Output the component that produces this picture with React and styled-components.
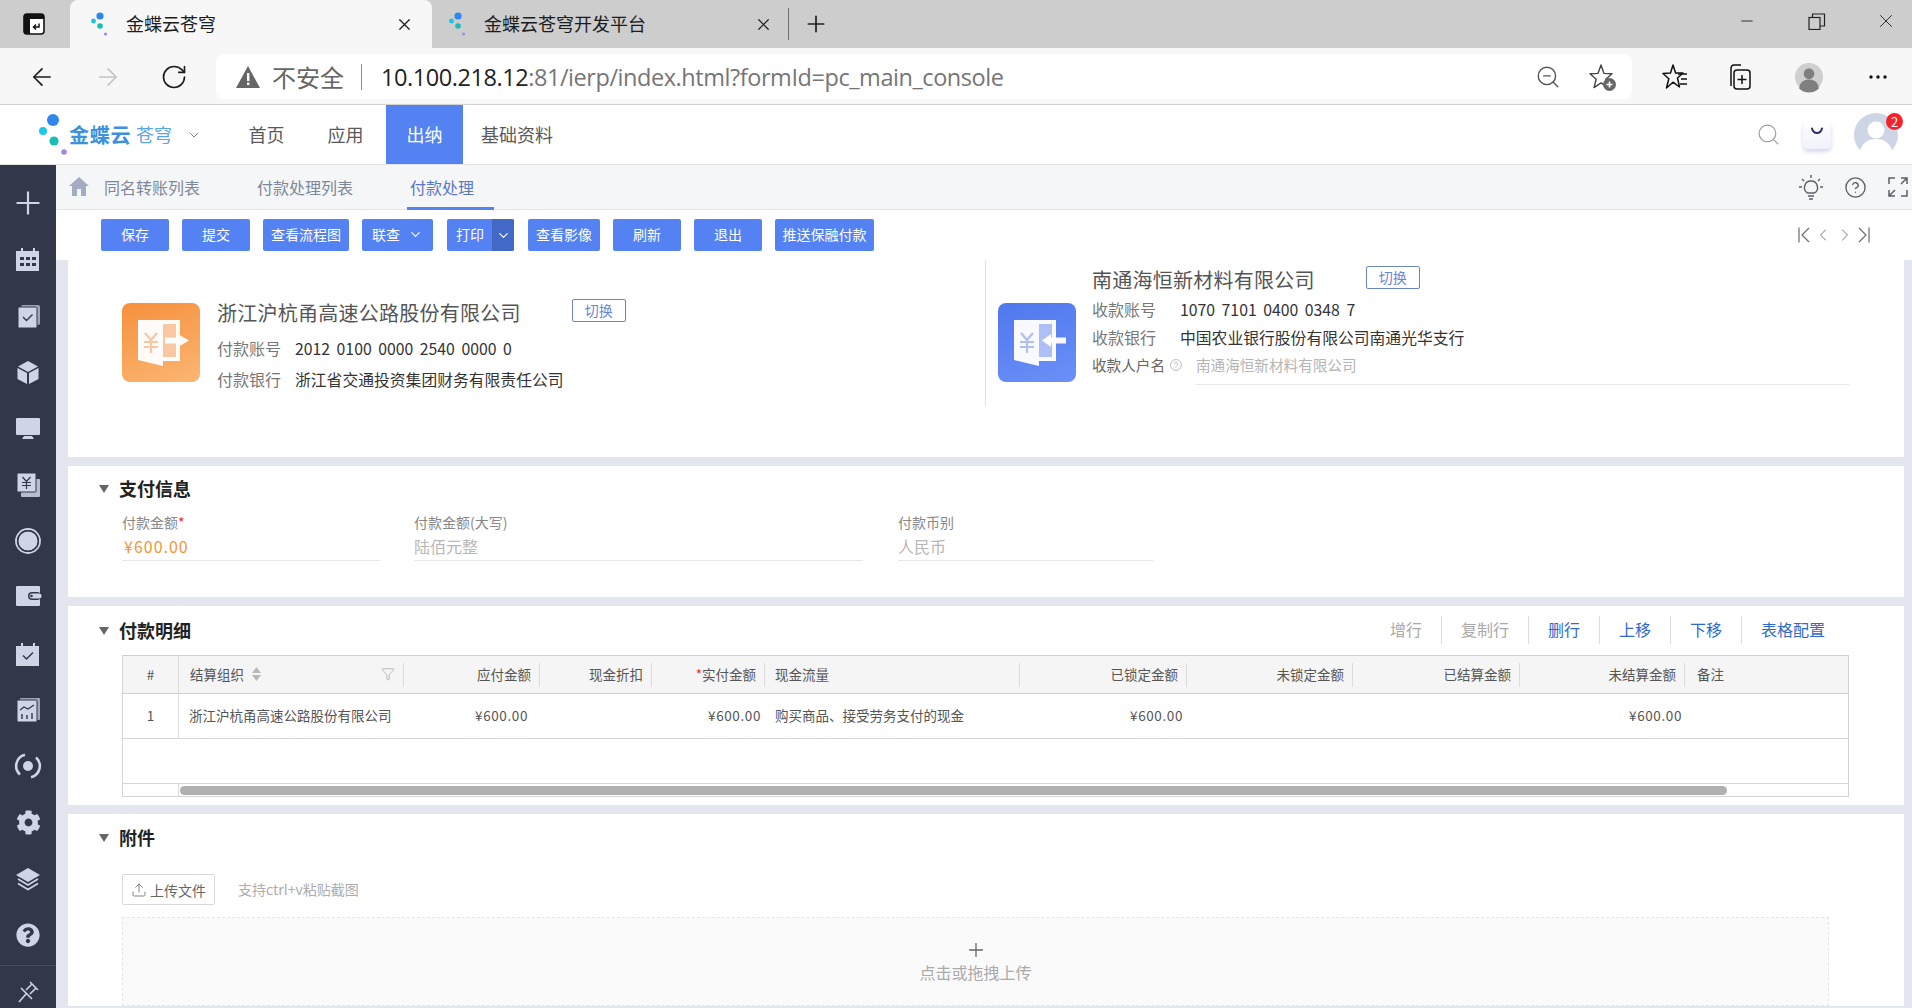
import React from "react";
import styled, { createGlobalStyle } from "styled-components";
import { ArrowLeft, ArrowRight, RotateCw, Plus, X, Minus, Search, ZoomOut, Upload, ChevronDown, ChevronLeft, ChevronRight, Filter, CircleHelp } from "lucide-react";
import { FaCog, FaQuestionCircle } from "react-icons/fa";

const CJK = `"Noto Sans CJK SC", "Noto Sans", sans-serif`;
const BLUE = "#5582f3";

const Global = createGlobalStyle`
  html, body { margin: 0; padding: 0; height: 100%; overflow: hidden; background: #fff; }
  body { font-family: ${CJK}; color: #333; }
  * { box-sizing: border-box; }
`;

const Page = styled.div`
  width: 1912px;
  height: 1008px;
  display: flex;
  flex-direction: column;
  overflow: hidden;
`;

/* ---------- browser chrome ---------- */
const TabStrip = styled.div`
  height: 48px;
  flex: none;
  display: flex;
  align-items: stretch;
  background: #cdcdcd;
`;
const TabManager = styled.div`
  width: 70px;
  display: flex;
  align-items: center;
  justify-content: center;
  padding-right: 2px;
`;
const Tab = styled.div`
  width: ${(p) => (p.$active ? 362 : 356)}px;
  display: flex;
  align-items: center;
  padding: 0 ${(p) => (p.$active ? 18 : 15)}px 0 ${(p) => (p.$active ? 21 : 17)}px;
  background: ${(p) => (p.$active ? "#f7f7f7" : "transparent")};
  border-radius: 8px 8px 0 0;
  font-size: 18px;
  color: #1c1c1c;
`;
const TabTitle = styled.span`
  margin-left: 19px;
  flex: 1;
  padding-bottom: 2px;
`;
const TabDivider = styled.div`
  width: 1px;
  height: 32px;
  align-self: center;
  background: #6f6f6f;
`;
const NewTab = styled.div`
  width: 54px;
  display: flex;
  align-items: center;
  justify-content: center;
  color: #222;
`;
const WindowControls = styled.div`
  margin-left: auto;
  display: flex;
  align-items: center;
  gap: 29.5px;
  padding-right: 6px;
  padding-bottom: 6px;
  color: #222;
`;
const WindowButton = styled.div`
  width: 40px;
  display: flex;
  align-items: center;
  justify-content: center;
`;

const BrowserBar = styled.div`
  height: 57px;
  flex: none;
  display: flex;
  align-items: flex-start;
  background: #f7f7f7;
  border-bottom: 1px solid #d2d2d2;
  padding: 6px 0 0 28px;
`;
const BarButtons = styled.div`
  display: flex;
  align-items: center;
  height: 45px;
  gap: ${(p) => p.$gap ?? 38}px;
  margin-left: ${(p) => p.$ml ?? 0}px;
`;
const BarButton = styled.div`
  width: 28px;
  display: flex;
  align-items: center;
  justify-content: center;
  margin-left: ${(p) => p.$ml ?? 0}px;
  color: ${(p) => p.$color || "#1c1c1c"};
`;
const Address = styled.div`
  width: 1416px;
  height: 45px;
  margin-left: 28px;
  display: flex;
  align-items: center;
  background: #fff;
  border-radius: 8px;
  padding-left: 20px;
`;
const NotSecure = styled.span`
  margin-left: 12px;
  font-size: 24px;
  color: #666;
`;
const AddressDivider = styled.span`
  width: 1px;
  height: 26px;
  margin: 0 19px 0 17px;
  background: #8a8a8a;
`;
const UrlHost = styled.span`
  font-family: "Open Sans", "Noto Sans", sans-serif;
  font-size: 23.5px;
  color: #222;
  letter-spacing: -0.44px;
`;
const UrlRest = styled(UrlHost)`
  color: #767676;
`;
const AddressTools = styled.div`
  margin-left: auto;
  display: flex;
  align-items: center;
  gap: 27px;
  padding-right: 15px;
`;

/* ---------- app header ---------- */
const Header = styled.header`
  height: 60px;
  flex: none;
  display: flex;
  align-items: stretch;
  background: #fff;
  border-bottom: 1px solid #e4e4e4;
`;
const Logo = styled.div`
  width: 228px;
  display: flex;
  align-items: center;
  padding-left: 39px;
`;
const LogoMain = styled.span`
  margin-left: 0;
  font-size: 20px;
  font-weight: 700;
  color: #3d8fe0;
  letter-spacing: 0.7px;
  padding-bottom: 1px;
`;
const LogoSub = styled.span`
  margin-left: 5px;
  font-size: 18px;
  color: #5ca3e8;
  padding-bottom: 1px;
`;
const LogoCaret = styled.span`
  margin-left: 14px;
  display: flex;
  color: #777;
`;
const Nav = styled.nav`
  display: flex;
  align-items: stretch;
  gap: 2px;
`;
const NavItem = styled.div`
  display: flex;
  align-items: center;
  padding: 0 20.5px 2px ${(p) => (p.$tight ? 16 : 20.5)}px;
  font-size: 18px;
  color: ${(p) => (p.$active ? "#fff" : "#595959")};
  background: ${(p) => (p.$active ? BLUE : "transparent")};
`;
const HeaderTools = styled.div`
  margin-left: auto;
  display: flex;
  align-items: center;
  padding-right: 14px;
`;
const Bag = styled.div`
  width: 28px;
  height: 28px;
  margin-left: 22px;
  border-radius: 5px;
  background: linear-gradient(#fff, #f0f1fb);
  box-shadow: 0 3px 4px #d6d8f0;
  display: flex;
  justify-content: center;
  padding-top: 6px;
`;
const AvatarWrap = styled.div`
  position: relative;
  width: 44px;
  height: 44px;
  margin-left: 23px;
  border-radius: 50%;
`;
const Badge = styled.span`
  position: absolute;
  top: 0;
  right: -5px;
  width: 17px;
  height: 17px;
  border-radius: 50%;
  background: #f5222d;
  color: #fff;
  font-size: 13px;
  line-height: 17px;
  text-align: center;
`;

/* ---------- shell ---------- */
const Shell = styled.div`
  flex: 1;
  min-height: 0;
  display: flex;
`;
const Sidebar = styled.aside`
  width: 56px;
  flex: none;
  display: flex;
  flex-direction: column;
  background: #33374a;
  padding-top: 10px;
  color: #cfd5e5;
`;
const SideItem = styled.div`
  height: 56.3px;
  flex: none;
  display: flex;
  align-items: center;
  justify-content: center;
`;
const SideFoot = styled.div`
  margin-top: 2px;
  border-top: 1px solid #444a5d;
  flex: 1;
  display: flex;
  align-items: flex-start;
  justify-content: center;
  padding-top: 13px;
`;
const Main = styled.main`
  flex: 1;
  min-width: 0;
  display: flex;
  flex-direction: column;
`;
const PageTabs = styled.div`
  height: 45px;
  flex: none;
  display: flex;
  align-items: stretch;
  background: #f5f6f8;
  border-bottom: 1px solid #e4e5e8;
  padding-left: 13px;
`;
const HomeIcon = styled.span`
  display: flex;
  align-items: center;
  width: 32px;
  padding-bottom: 3px;
`;
const PageTab = styled.div`
  display: flex;
  align-items: center;
  margin-right: 34px;
  padding: 1px 20px 0 3px;
  font-size: 16px;
  color: ${(p) => (p.$active ? "#5a78c4" : "#7d8799")};
  border-bottom: 3px solid ${(p) => (p.$active ? BLUE : "transparent")};
  margin-bottom: -1px;
`;
const PageTabTools = styled.div`
  margin-left: auto;
  display: flex;
  align-items: center;
  gap: 20px;
  padding-right: 3px;
  color: #5a5f69;
`;
const ActionBar = styled.div`
  height: 50px;
  flex: none;
  display: flex;
  align-items: flex-start;
  background: #fff;
  padding: 9px 40px 0 45px;
`;
const Btn = styled.button`
  height: 32px;
  width: ${(p) => p.$w}px;
  margin-right: ${(p) => p.$mr ?? 13}px;
  padding: 0 0 2px;
  border: 0;
  border-radius: 2px;
  background: ${BLUE};
  color: #fff;
  font: 14px ${CJK};
  display: flex;
  align-items: center;
  justify-content: center;
  gap: 8px;
  overflow: hidden;
`;
const SplitBtn = styled(Btn)`
  padding: 0;
`;
const SplitPart = styled.span`
  height: 100%;
  width: 22px;
  margin-left: auto;
  background: #4369c7;
  display: flex;
  align-items: center;
  justify-content: center;
`;
const SplitLabel = styled.span`
  margin-left: 9px;
  padding-bottom: 2px;
`;
const Pager = styled.div`
  margin-left: auto;
  display: flex;
  align-items: center;
  height: 32px;
  gap: 1.5px;
  color: #6c6c6c;
`;
const Content = styled.div`
  flex: 1;
  min-height: 0;
  overflow: hidden;
  background: #e3e6ee;
  padding: 0 8px 0 12px;
  display: flex;
  flex-direction: column;
  gap: 9px;
`;
const Card = styled.section`
  background: #fff;
  flex: none;
  height: ${(p) => (p.$h ? p.$h + "px" : "auto")};
`;

/* accounts */
const Parties = styled.div`
  display: grid;
  grid-template-columns: 917px 1fr;
  height: 197px;
`;
const PartyLeft = styled.div`
  display: flex;
  gap: 17px;
  padding: 39px 0 0 54px;
  align-items: flex-start;
`;
const PartyRight = styled.div`
  height: 146px;
  border-left: 1px solid #dfe1e5;
  display: flex;
  gap: 16px;
  padding: 6px 0 0 12px;
  align-items: flex-start;
`;
const AccountIcon = styled.div`
  width: 78px;
  height: 79px;
  flex: none;
  margin-top: ${(p) => p.$mt}px;
  border-radius: 8px;
  background: ${(p) => p.$bg};
`;
const PartyInfo = styled.div`
  flex: none;
  display: flex;
  flex-direction: column;
`;
const PartyTitleRow = styled.div`
  height: 26px;
  display: flex;
  align-items: center;
  margin-bottom: ${(p) => p.$mb}px;
`;
const PartyName = styled.div`
  font-size: 20px;
  color: #555;
  letter-spacing: 0.25px;
`;
const SwitchBtn = styled.div`
  width: 54px;
  height: 23px;
  margin-left: ${(p) => p.$ml}px;
  margin-bottom: 3px;
  padding-bottom: 2px;
  border: 1px solid #6a86c4;
  border-radius: 2px;
  color: #6a86d8;
  font-size: 14px;
  display: flex;
  align-items: center;
  justify-content: center;
`;
const InfoRow = styled.div`
  height: ${(p) => p.$h}px;
  display: flex;
  align-items: center;
  font-size: 16px;
`;
const InfoLabel = styled.span`
  width: ${(p) => p.$w}px;
  flex: none;
  color: #777;
`;
const InfoValue = styled.span`
  font-size: 15.8px;
  color: #333;
  word-spacing: 3px;
`;
const PayeeRow = styled.div`
  height: 34px;
  display: flex;
  font-size: 14.6px;
`;
const PayeeLabel = styled.span`
  line-height: 28px;
  color: #666;
`;
const PayeeHelp = styled.span`
  height: 28px;
  display: flex;
  align-items: center;
  margin: 0 14px 0 5px;
  color: #bbb;
`;
const PayeeValue = styled.span`
  width: 653px;
  line-height: 28px;
  color: #b4b4b4;
  border-bottom: 1px solid #e6e6e6;
`;

/* sections */
const SectionHead = styled.div`
  height: ${(p) => p.$h}px;
  display: flex;
  align-items: center;
  padding-left: 31px;
`;
const Caret = styled.span`
  width: 0;
  height: 0;
  border-left: 5.5px solid transparent;
  border-right: 5.5px solid transparent;
  border-top: 8px solid #666;
`;
const SectionTitle = styled.h3`
  margin: 0 0 0 10px;
  padding-bottom: 2px;
  font-size: 18px;
  font-weight: 700;
  color: #222;
`;
const Fields = styled.div`
  display: flex;
  padding-left: 54px;
`;
const Field = styled.div`
  width: ${(p) => p.$w}px;
  margin-right: ${(p) => p.$mr ?? 0}px;
`;
const FieldLabel = styled.div`
  height: 22px;
  line-height: 22px;
  font-size: 14px;
  color: #888;
`;
const Req = styled.span`
  color: #f5222d;
`;
const FieldValue = styled.div`
  height: 28px;
  line-height: 27px;
  font-size: 16px;
  letter-spacing: ${(p) => p.$ls ?? 0}px;
  padding-left: ${(p) => p.$pl ?? 0}px;
  color: ${(p) => p.$color || "#b8b8b8"};
  border-bottom: 1px solid #e6e6e6;
`;

/* table */
const GridActions = styled.div`
  margin-left: auto;
  display: flex;
  align-items: center;
  padding-right: 60px;
  padding-bottom: 1px;
`;
const GridAction = styled.div`
  height: 28px;
  line-height: 26px;
  padding: 0 19px;
  font-size: 16px;
  color: ${(p) => (p.$off ? "#a9a9a9" : "#2f6ad0")};
  border-left: ${(p) => (p.$first ? "0" : "1px solid #ddd")};
`;
const COLS = "56px 225px 136px 112px 113px 255px 167px 166px 167px 165px 1fr";
const Table = styled.div`
  margin-left: 54px;
  width: 1727px;
  border-left: 1px solid #d4d4d4;
  border-right: 1px solid #d4d4d4;
  border-bottom: 1px solid #d4d4d4;
`;
const HeadRow = styled.div`
  height: 39px;
  display: grid;
  grid-template-columns: ${COLS};
  align-items: center;
  background: #f5f5f5;
  border-top: 1px solid #cfcfcf;
  border-bottom: 1px solid #cfcfcf;
`;
const HeadCell = styled.div`
  height: 24px;
  display: flex;
  align-items: center;
  justify-content: ${(p) => (p.$right ? "flex-end" : "flex-start")};
  gap: 8px;
  padding: 0 8px 2px ${(p) => p.$pl ?? 5}px;
  font-size: 13.5px;
  color: #555;
  border-right: ${(p) => (p.$nosep ? "0" : "1px solid #dcdcdc")};
`;
const HeadIndex = styled(HeadCell)`
  height: 37px;
  justify-content: center;
  padding: 0 0 2px;
`;
const HeadFilter = styled.span`
  margin-left: auto;
  display: flex;
  color: #999;
  padding-right: 0;
`;
const SortIcon = styled.span`
  display: flex;
`;
const BodyRow = styled.div`
  height: ${(p) => p.$h}px;
  display: grid;
  grid-template-columns: ${COLS};
  align-items: center;
  border-bottom: 1px solid #d6d6d6;
`;
const BodyCell = styled.div`
  height: 100%;
  display: flex;
  align-items: center;
  justify-content: ${(p) => (p.$right ? "flex-end" : p.$center ? "center" : "flex-start")};
  padding: 0 ${(p) => p.$pr ?? 5}px 2px ${(p) => p.$pl ?? 5}px;
  font-size: 13.5px;
  letter-spacing: ${(p) => (p.$right ? 0.6 : 0)}px;
  color: #555;
  white-space: nowrap;
  border-right: ${(p) => (p.$sep ? "1px solid #dcdcdc" : "0")};
`;
const ScrollRow = styled.div`
  height: 12px;
  display: flex;
`;
const ScrollCorner = styled.div`
  width: 56px;
  border-right: 1px solid #dcdcdc;
`;
const ScrollThumb = styled.div`
  width: 1547px;
  height: 9px;
  margin: 2px 0 0 1px;
  border-radius: 5px;
  background: #b0b0b0;
`;

/* attachments */
const UploadRow = styled.div`
  display: flex;
  align-items: center;
  margin: 12px 0 12px 54px;
`;
const UploadBtn = styled.div`
  width: 93px;
  height: 31px;
  border: 1px solid #d9d9d9;
  border-radius: 2px;
  display: flex;
  align-items: center;
  justify-content: center;
  gap: 3px;
  font-size: 14px;
  color: #666;
`;
const UploadHint = styled.span`
  margin-left: 23px;
  padding-bottom: 2px;
  font-size: 14px;
  color: #adadad;
`;
const Dropzone = styled.div`
  margin-left: 54px;
  width: 1707px;
  height: 89px;
  background: #fafafa;
  border: 1px dashed #e6e6e6;
  display: flex;
  flex-direction: column;
  align-items: center;
  padding-top: 21px;
  color: #666;
`;
const DropText = styled.div`
  font-size: 16px;
  line-height: 22px;
  color: #aaa;
`;

/* ---------- drawings ---------- */
const Favicon = () => (
  <svg width="16" height="24" viewBox="0 0 16 24" fill="none">
    <circle cx="9" cy="4" r="3.6" fill="#2f86ee" />
    <circle cx="2.5" cy="9" r="2.4" fill="#1cc3e3" />
    <circle cx="9" cy="14" r="2.8" fill="#19bdb4" />
    <circle cx="14.5" cy="22" r="1.6" fill="#a58be6" />
  </svg>
);
const LogoMark = () => (
  <svg width="30" height="42" viewBox="0 0 30 42" fill="none">
    <circle cx="14" cy="6" r="6" fill="#2f86ee" />
    <circle cx="4" cy="17" r="4" fill="#1cc9e8" />
    <circle cx="15" cy="27" r="4.6" fill="#19bdb4" />
    <circle cx="25" cy="38" r="2.8" fill="#a884e8" />
  </svg>
);
const TabManagerIcon = () => (
  <svg width="22" height="22" viewBox="0 0 22 22" fill="none">
    <rect x="1" y="1" width="20" height="20" rx="3" fill="#fff" stroke="#111" strokeWidth="1.6" />
    <path d="M1 3.5a2.5 2.5 0 0 1 2.5-2.5h15A2.5 2.5 0 0 1 21 3.5V6H1z" fill="#111" />
    <rect x="1" y="5" width="6" height="16" fill="#111" />
    <path d="M16 10.5v3.5h-5M13 11.5l-2.5 2.5 2.5 2.5" stroke="#111" strokeWidth="1.5" fill="none" />
  </svg>
);
const Warn = () => (
  <svg width="24" height="22" viewBox="0 0 24 22">
    <path d="M12 0 L24 22 H0 Z" fill="#666" strokeLinejoin="round" />
    <rect x="11" y="7" width="2.4" height="8" fill="#fff" />
    <rect x="11" y="16.5" width="2.4" height="2.6" fill="#fff" />
  </svg>
);
const StarPlus = () => (
  <svg width="28" height="30" viewBox="0 0 28 30" fill="none">
    <path d="M12 3l3 8.4 8 .4-6.2 5.4 2.2 8.4-7-4.7-7 4.7 2.2-8.4L1 11.8l8-.4z" stroke="#444" strokeWidth="1.4" strokeLinejoin="round" />
    <circle cx="20.5" cy="22.5" r="6.5" fill="#666" />
    <path d="M20.5 19.5v6M17.5 22.5h6" stroke="#fff" strokeWidth="1.6" />
  </svg>
);
const Favorites = () => (
  <svg width="28" height="28" viewBox="0 0 28 28" fill="none">
    <path d="M12 2l2.6 8H22l-5.5 5 2 9-6.500-4.800L5.500 25l2.300-9.200L2 10.500l7.500-.5z" stroke="#111" strokeWidth="1.5" strokeLinejoin="round" />
    <path d="M17 11h9M20 16h6M19 21h7" stroke="#111" strokeWidth="1.5" />
  </svg>
);
const Collections = () => (
  <svg width="26" height="28" viewBox="0 0 26 28" fill="none">
    <path d="M5 23V6c0-2 1-4 3-4h7" stroke="#111" strokeWidth="1.5" />
    <rect x="8" y="7" width="16" height="19" rx="3" stroke="#111" strokeWidth="1.5" fill="#f7f7f7" />
    <path d="M16 12v9M11.5 16.5h9" stroke="#111" strokeWidth="1.5" />
  </svg>
);
const RestoreIcon = () => (
  <svg width="18" height="17" viewBox="0 0 18 17" fill="none" stroke="#222" strokeWidth="1.2">
    <rect x="1" y="4.5" width="11" height="12" />
    <path d="M4.5 4.5V1h12v12H12" />
  </svg>
);
const Profile = () => (
  <svg width="34" height="34" viewBox="0 0 34 34">
    <circle cx="17" cy="17" r="17" fill="#cfcfcf" />
    <circle cx="17" cy="13" r="6.5" fill="#7f7f7f" />
    <path d="M5 31c1-8 6-11 12-11s11 3 12 11a17 17 0 0 1-24 0z" fill="#7f7f7f" />
  </svg>
);
const Dots = () => (
  <svg width="20" height="6" viewBox="0 0 20 6" fill="#111">
    <circle cx="3" cy="3" r="1.7" />
    <circle cx="10" cy="3" r="1.7" />
    <circle cx="17" cy="3" r="1.7" />
  </svg>
);
const Smile = () => (
  <svg width="14" height="8" viewBox="0 0 14 8" fill="none">
    <path d="M2 1.5c1 3.5 3 4.5 5 4.5s4-1 5-4.500" stroke="#2a2f6b" strokeWidth="2" strokeLinecap="round" />
  </svg>
);
const Avatar = () => (
  <svg width="44" height="44" viewBox="0 0 44 44">
    <circle cx="22" cy="22" r="22" fill="#ced6e6" />
    <circle cx="22" cy="17" r="8.5" fill="#fff" />
    <path d="M6 38c2-8 8-12 16-12s14 4 16 12a22 22 0 0 1-32 0z" fill="#fff" />
  </svg>
);
const Home = () => (
  <svg width="20" height="20" viewBox="0 0 20 20" fill="#a3acc0">
    <path d="M10 1 L20 10 H17 V20 H12 V13 H8 V20 H3 V10 H0 Z" />
  </svg>
);
const Bulb = () => (
  <svg width="26" height="26" viewBox="0 0 26 26" fill="none" stroke="#5a5f69" strokeWidth="1.4">
    <path d="M13 1v3M4 5l2 2M22 5l-2 2M1 13h3M22 13h3" />
    <path d="M13 7a6.5 6.5 0 0 0-3.5 12h7A6.5 6.5 0 0 0 13 7z" />
    <path d="M10 22h6M11 25h4" />
  </svg>
);
const Fullscreen = () => (
  <svg width="22" height="22" viewBox="0 0 22 22" fill="none" stroke="#5a5f69" strokeWidth="1.5">
    <path d="M8 2H2v6M14 2h6v6M20 14v6h-6M8 20H2v-6M20 2l-6 6M2 20l6-6" />
  </svg>
);
const LastPage = () => (
  <svg width="16" height="18" viewBox="0 0 16 18" fill="none" stroke="#6c6c6c" strokeWidth="1.2">
    <path d="M3 2l7 7-7 7M13 1.5v15" />
  </svg>
);
const FirstPage = () => (
  <svg width="16" height="18" viewBox="0 0 16 18" fill="none" stroke="#6c6c6c" strokeWidth="1.2">
    <path d="M13 2L6 9l7 7M3 1.5v15" />
  </svg>
);
const Sort = () => (
  <svg width="9" height="14" viewBox="0 0 9 14" fill="#b9b9b9">
    <path d="M4.5 0L9 6H0zM4.5 14L0 8h9z" />
  </svg>
);
const Help = () => (
  <svg width="12" height="12" viewBox="0 0 12 12" fill="none" stroke="#bbb">
    <circle cx="6" cy="6" r="5.4" />
    <path d="M4.3 4.7C4.4 3 7.7 3 7.7 4.7 7.7 6 6 5.8 6 7.3M6 8.5v1" />
  </svg>
);
const PayIcon = ({ inner, out }) => (
  <svg width="78" height="79" viewBox="0 0 78 79">
    <path d="M16 17H58V58H41V63L16 57Z" fill="#fff" fillOpacity="0.96" />
    <rect x="41" y="21" width="13" height="33" fill={inner} />
    <path d="M23 30l6 7 6-7M29 37v13M22 39h14M22 44h14" fill="none" stroke={inner} strokeWidth="2.2" />
    {out ? (
      <path d="M43 34.5H56V31L67 37.5 56 44V40.5H43Z" fill="#fff" fillOpacity="0.96" />
    ) : (
      <path d="M68 34.5H53V31L44 37.5 53 44V40.5H68Z" fill="#fff" fillOpacity="0.96" />
    )}
  </svg>
);

const D = "#33374a";
const S = (p) => <svg width="28" height="28" viewBox="0 0 28 28" fill="#cfd5e5" {...p} />;
const SideIcons = [
  <S key="a"><path d="M14 2.5v23M2.5 14h23" stroke="#cfd5e5" strokeWidth="2.2" fill="none" /></S>,
  <S key="b"><path d="M3 6h4V3h2v3h10V3h2v3h4v20H2V6z" /><g fill={D}><rect x="6" y="12" width="4" height="3" /><rect x="12" y="12" width="4" height="3" /><rect x="18" y="12" width="4" height="3" /><rect x="6" y="18" width="4" height="3" /><rect x="12" y="18" width="4" height="3" /><rect x="18" y="18" width="4" height="3" /></g></S>,
  <S key="c"><rect x="7" y="3" width="19" height="20" rx="2" opacity="0.7" /><rect x="4" y="5" width="19" height="21" rx="1.5" stroke={D} /><path d="M9 15l3.5 3.5 6-6" stroke={D} strokeWidth="1.4" fill="none" /></S>,
  <S key="d"><path d="M14 3l10 5.5L14 14 4 8.5z" /><path d="M3.5 10L13 15v11l-9.5-5z" /><path d="M24.5 10L15 15v11l9.5-5z" /></S>,
  <S key="e"><rect x="2" y="4" width="24" height="17" rx="1" /><path d="M10 22h8l2 3H8z" /></S>,
  <S key="f"><rect x="7" y="8" width="19" height="18" rx="1" opacity="0.85" /><rect x="3" y="2" width="19" height="19" rx="1" stroke={D} /><path d="M8.5 6l4 4.5 4-4.5M12.5 10.5V18M8 11.5h9M8 14.5h9" stroke={D} strokeWidth="1.2" fill="none" /></S>,
  <S key="g"><circle cx="14" cy="14" r="10" /><circle cx="14" cy="14" r="12" fill="none" stroke="#cfd5e5" strokeWidth="1.8" /><circle cx="14" cy="14" r="10.3" fill="none" stroke={D} strokeWidth="1.4" /></S>,
  <S key="h"><rect x="2" y="3" width="24" height="20" rx="1" /><rect x="14" y="9" width="13" height="8" rx="4" fill={D} /><rect x="15.5" y="10.5" width="12" height="5" rx="2.5" /><circle cx="17.5" cy="13" r="1.3" fill={D} /></S>,
  <S key="i"><path d="M3 6h4V3h2v3h10V3h2v3h4v20H2V6z" /><path d="M9 15.5l3.5 3.5 6.5-6.5" stroke={D} strokeWidth="1.5" fill="none" /></S>,
  <S key="j"><rect x="6" y="2" width="20" height="22" rx="1" opacity="0.7" /><rect x="3" y="4" width="20" height="22" rx="1" stroke={D} /><path d="M6 14l4-3 4 2 6-4" stroke={D} strokeWidth="1.2" fill="none" /><path d="M8 23v-5M13 23v-4M18 23v-6" stroke={D} strokeWidth="1.4" /></S>,
  <S key="k"><circle cx="14" cy="14" r="5" /><path d="M11 2.8A11.5 11.5 0 0 0 6 22.5M22 5.500A11.500 11.500 0 0 1 17 25.200" stroke="#cfd5e5" strokeWidth="2.6" fill="none" /></S>,
  <FaCog key="l" size={25} />,
  <S key="m"><path d="M14 3L26 10 14 17 2 10z" /><path d="M4 14l10 6 10-6M4 18.5l10 6 10-6" stroke="#cfd5e5" strokeWidth="1.6" fill="none" /></S>,
  <FaQuestionCircle key="n" size={24} />,
];

export default function App() {
  return (
    <Page>
      <Global />
      <TabStrip>
        <TabManager><TabManagerIcon /></TabManager>
        <Tab $active><Favicon /><TabTitle>金蝶云苍穹</TabTitle><X size={19} strokeWidth={1.5} /></Tab>
        <Tab><Favicon /><TabTitle>金蝶云苍穹开发平台</TabTitle><X size={19} strokeWidth={1.5} /></Tab>
        <TabDivider />
        <NewTab><Plus size={26} strokeWidth={1.6} /></NewTab>
        <WindowControls>
          <WindowButton><Minus size={18} strokeWidth={1.2} /></WindowButton>
          <WindowButton><RestoreIcon /></WindowButton>
          <WindowButton><X size={22} strokeWidth={1} /></WindowButton>
        </WindowControls>
      </TabStrip>

      <BrowserBar>
        <BarButtons>
          <BarButton><ArrowLeft size={30} strokeWidth={1.4} /></BarButton>
          <BarButton $color="#c4c4c4"><ArrowRight size={30} strokeWidth={1.4} /></BarButton>
          <BarButton><RotateCw size={28} strokeWidth={1.4} /></BarButton>
        </BarButtons>
        <Address>
          <Warn />
          <NotSecure>不安全</NotSecure>
          <AddressDivider />
          <UrlHost>10.100.218.12</UrlHost>
          <UrlRest>:81/ierp/index.html?formId=pc_main_console</UrlRest>
          <AddressTools>
            <BarButton $color="#555"><ZoomOut size={26} strokeWidth={1.3} /></BarButton>
            <BarButton><StarPlus /></BarButton>
          </AddressTools>
        </Address>
        <BarButtons $ml={29}>
          <BarButton><Favorites /></BarButton>
          <BarButton $ml={-2}><Collections /></BarButton>
          <BarButton $ml={4}><Profile /></BarButton>
          <BarButton $ml={3}><Dots /></BarButton>
        </BarButtons>
      </BrowserBar>

      <Header>
        <Logo>
          <LogoMark />
          <LogoMain>金蝶云</LogoMain>
          <LogoSub>苍穹</LogoSub>
          <LogoCaret><ChevronDown size={16} strokeWidth={1.4} /></LogoCaret>
        </Logo>
        <Nav>
          <NavItem>首页</NavItem>
          <NavItem>应用</NavItem>
          <NavItem $active>出纳</NavItem>
          <NavItem $tight>基础资料</NavItem>
        </Nav>
        <HeaderTools>
          <Search size={25} strokeWidth={1.1} color="#999" />
          <Bag><Smile /></Bag>
          <AvatarWrap><Avatar /><Badge>2</Badge></AvatarWrap>
        </HeaderTools>
      </Header>

      <Shell>
        <Sidebar>
          {SideIcons.map((icon, i) => <SideItem key={i}>{icon}</SideItem>)}
          <SideFoot>
            <svg width="26" height="26" viewBox="0 0 26 26" fill="none" stroke="#cfd5e5" strokeWidth="1.6">
              <path d="M15 3l8 8M17 5l-6 6M21 9l-6 6M6 9l11 11M11 15l-7 8" />
            </svg>
          </SideFoot>
        </Sidebar>
        <Main>
          <PageTabs>
            <HomeIcon><Home /></HomeIcon>
            <PageTab>同名转账列表</PageTab>
            <PageTab>付款处理列表</PageTab>
            <PageTab $active>付款处理</PageTab>
            <PageTabTools>
              <Bulb />
              <CircleHelp size={23} strokeWidth={1.4} />
              <Fullscreen />
            </PageTabTools>
          </PageTabs>

          <ActionBar>
            <Btn $w={68}>保存</Btn>
            <Btn $w={68}>提交</Btn>
            <Btn $w={86}>查看流程图</Btn>
            <Btn $w={71} $mr={14}>联查<ChevronDown size={15} strokeWidth={1.8} /></Btn>
            <SplitBtn $w={67} $mr={14}><SplitLabel>打印</SplitLabel><SplitPart><ChevronDown size={15} strokeWidth={1.8} /></SplitPart></SplitBtn>
            <Btn $w={72}>查看影像</Btn>
            <Btn $w={68}>刷新</Btn>
            <Btn $w={68}>退出</Btn>
            <Btn $w={99}>推送保融付款</Btn>
            <Pager>
              <FirstPage />
              <ChevronLeft size={20} strokeWidth={1.1} />
              <ChevronRight size={20} strokeWidth={1.1} />
              <LastPage />
            </Pager>
          </ActionBar>

          <Content>
            <Card $h={197}>
              <Parties>
                <PartyLeft>
                  <AccountIcon $mt={4} $bg="linear-gradient(160deg,#f6903c,#fbb673)"><PayIcon inner="#f9c7a1" out /></AccountIcon>
                  <PartyInfo>
                    <PartyTitleRow $mb={7.5}>
                      <PartyName>浙江沪杭甬高速公路股份有限公司</PartyName>
                      <SwitchBtn $ml={51}>切换</SwitchBtn>
                    </PartyTitleRow>
                    <InfoRow $h={31}><InfoLabel $w={78}>付款账号</InfoLabel><InfoValue>2012 0100 0000 2540 0000 0</InfoValue></InfoRow>
                    <InfoRow $h={31}><InfoLabel $w={78}>付款银行</InfoLabel><InfoValue>浙江省交通投资集团财务有限责任公司</InfoValue></InfoRow>
                  </PartyInfo>
                </PartyLeft>
                <PartyRight>
                  <AccountIcon $mt={37} $bg="linear-gradient(160deg,#4f78ee,#6b90f7)"><PayIcon inner="#aebff6" /></AccountIcon>
                  <PartyInfo>
                    <PartyTitleRow $mb={3}>
                      <PartyName>南通海恒新材料有限公司</PartyName>
                      <SwitchBtn $ml={51}>切换</SwitchBtn>
                    </PartyTitleRow>
                    <InfoRow $h={28}><InfoLabel $w={88}>收款账号</InfoLabel><InfoValue>1070 7101 0400 0348 7</InfoValue></InfoRow>
                    <InfoRow $h={28}><InfoLabel $w={88}>收款银行</InfoLabel><InfoValue>中国农业银行股份有限公司南通光华支行</InfoValue></InfoRow>
                    <PayeeRow>
                      <PayeeLabel>收款人户名</PayeeLabel>
                      <PayeeHelp><Help /></PayeeHelp>
                      <PayeeValue>南通海恒新材料有限公司</PayeeValue>
                    </PayeeRow>
                  </PartyInfo>
                </PartyRight>
              </Parties>
            </Card>

            <Card $h={131}>
              <SectionHead $h={45}><Caret /><SectionTitle>支付信息</SectionTitle></SectionHead>
              <Fields>
                <Field $w={258} $mr={34}><FieldLabel>付款金额<Req>*</Req></FieldLabel><FieldValue $color="#f5933a" $pl={2} $ls={1}>¥600.00</FieldValue></Field>
                <Field $w={449} $mr={35}><FieldLabel>付款金额(大写)</FieldLabel><FieldValue>陆佰元整</FieldValue></Field>
                <Field $w={255}><FieldLabel>付款币别</FieldLabel><FieldValue>人民币</FieldValue></Field>
              </Fields>
            </Card>

            <Card $h={199}>
              <SectionHead $h={49}>
                <Caret /><SectionTitle>付款明细</SectionTitle>
                <GridActions>
                  <GridAction $off $first>增行</GridAction>
                  <GridAction $off>复制行</GridAction>
                  <GridAction>删行</GridAction>
                  <GridAction>上移</GridAction>
                  <GridAction>下移</GridAction>
                  <GridAction>表格配置</GridAction>
                </GridActions>
              </SectionHead>
              <Table>
                <HeadRow>
                  <HeadIndex>#</HeadIndex>
                  <HeadCell $pl={11}>结算组织<SortIcon><Sort /></SortIcon><HeadFilter><Filter size={14} strokeWidth={1.1} /></HeadFilter></HeadCell>
                  <HeadCell $right>应付金额</HeadCell>
                  <HeadCell $right>现金折扣</HeadCell>
                  <HeadCell $right><span><Req>*</Req>实付金额</span></HeadCell>
                  <HeadCell $pl={10}>现金流量</HeadCell>
                  <HeadCell $right>已锁定金额</HeadCell>
                  <HeadCell $right>未锁定金额</HeadCell>
                  <HeadCell $right>已结算金额</HeadCell>
                  <HeadCell $right>未结算金额</HeadCell>
                  <HeadCell $nosep $pl={12}>备注</HeadCell>
                </HeadRow>
                <BodyRow $h={45}>
                  <BodyCell $center $sep>1</BodyCell>
                  <BodyCell $pl={10}>浙江沪杭甬高速公路股份有限公司</BodyCell>
                  <BodyCell $right $pr={12}>¥600.00</BodyCell>
                  <BodyCell />
                  <BodyCell $right $pr={4}>¥600.00</BodyCell>
                  <BodyCell $pl={10}>购买商品、接受劳务支付的现金</BodyCell>
                  <BodyCell $right $pr={4}>¥600.00</BodyCell>
                  <BodyCell />
                  <BodyCell />
                  <BodyCell $right $pr={3}>¥600.00</BodyCell>
                  <BodyCell />
                </BodyRow>
                <BodyRow $h={45} />
                <ScrollRow><ScrollCorner /><ScrollThumb /></ScrollRow>
              </Table>
            </Card>

            <Card>
              <SectionHead $h={48}><Caret /><SectionTitle>附件</SectionTitle></SectionHead>
              <UploadRow>
                <UploadBtn><Upload size={16} strokeWidth={1.2} />上传文件</UploadBtn>
                <UploadHint>支持ctrl+v粘贴截图</UploadHint>
              </UploadRow>
              <Dropzone>
                <Plus size={22} strokeWidth={1.4} />
                <DropText>点击或拖拽上传</DropText>
              </Dropzone>
            </Card>
          </Content>
        </Main>
      </Shell>
    </Page>
  );
}
